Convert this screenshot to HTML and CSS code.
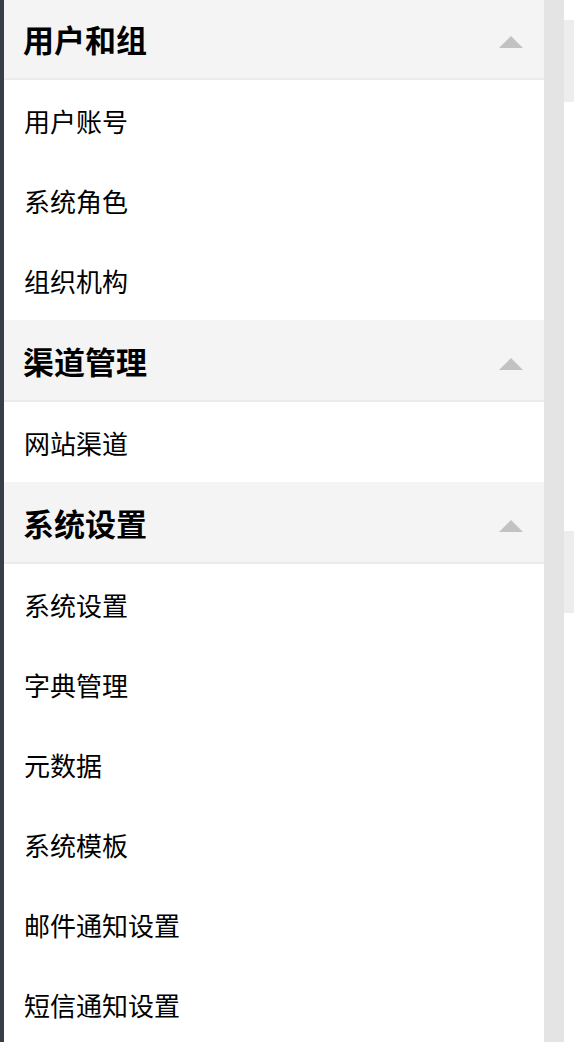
FILE: index.html
```html
<!DOCTYPE html>
<html>
<head>
<title>系统管理</title>
<link rel="stylesheet" href="styles.css">
</head>
<body>
<div class="layout">
<div class="side-menu">
  <div class="menu-group">
    <div class="group-title">用户和组<span class="arrow"></span></div>
    <div class="menu-item">用户账号</div>
    <div class="menu-item">系统角色</div>
    <div class="menu-item">组织机构</div>
  </div>
  <div class="menu-group">
    <div class="group-title">渠道管理<span class="arrow"></span></div>
    <div class="menu-item">网站渠道</div>
  </div>
  <div class="menu-group">
    <div class="group-title">系统设置<span class="arrow"></span></div>
    <div class="menu-item">系统设置</div>
    <div class="menu-item">字典管理</div>
    <div class="menu-item">元数据</div>
    <div class="menu-item">系统模板</div>
    <div class="menu-item">邮件通知设置</div>
    <div class="menu-item">短信通知设置</div>
  </div>
</div>
<div class="main">
  <div class="panel">
    <div class="panel-head"></div>
    <div class="panel-body"></div>
    <div class="panel-head"></div>
  </div>
</div>
</div>
</body>
</html>
```

FILE: styles.css
```css
body {
margin: 0;
font-family: "Noto Sans CJK SC", "Noto Sans", sans-serif;
background-color: #ffffff;
overflow: hidden;
}

.layout {
display: flex;
height: 1042px;
}

.side-menu {
width: 540px;
flex-shrink: 0;
border-left: 4px solid #393d49;
background-color: #ffffff;
margin-top: -2px;
}

.group-title {
position: relative;
height: 80px;
line-height: 82px;
padding-left: 19px;
font-size: 31px;
font-weight: 700;
color: #000000;
background-color: #f4f4f4;
border-bottom: 2px solid #ebebeb;
}

.arrow {
position: absolute;
right: 21px;
top: 38px;
width: 0;
height: 0;
border-left: 12px solid transparent;
border-right: 12px solid transparent;
border-bottom: 12px solid #c2c2c2;
}

.menu-item {
height: 80px;
line-height: 82px;
padding-left: 20px;
font-size: 26px;
color: #000000;
}

.main {
flex: 1;
background-color: #e4e4e4;
padding-left: 20px;
}

.panel {
height: 100%;
background-color: #ffffff;
padding-top: 20px;
box-sizing: border-box;
}

.panel-head {
height: 82px;
background-color: #ededed;
}

.panel-body {
height: 429px;
}
```
